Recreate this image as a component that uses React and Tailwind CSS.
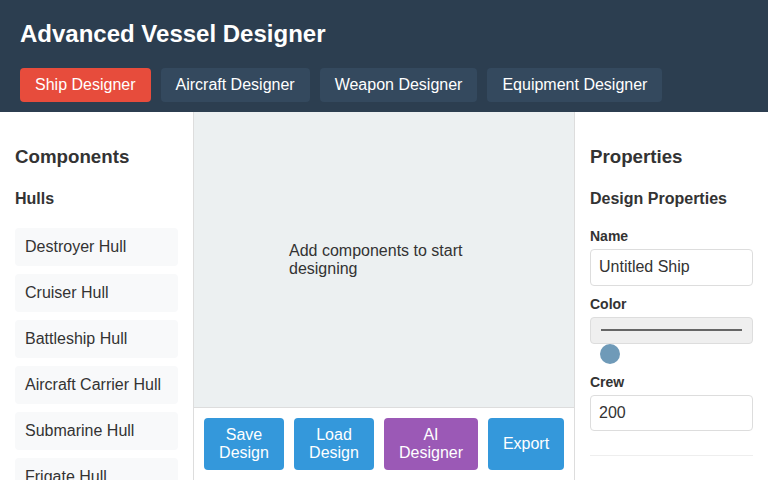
import React from "react";

const tabs = ["Ship Designer", "Aircraft Designer", "Weapon Designer", "Equipment Designer"];
const hulls = [
  "Destroyer Hull",
  "Cruiser Hull",
  "Battleship Hull",
  "Aircraft Carrier Hull",
  "Submarine Hull",
  "Frigate Hull",
];

function Header() {
  return (
    <header className="bg-[#2c3e50] px-5 pt-5 pb-[10px] text-white">
      <h1 className="text-[24px] font-bold leading-[28px]">Advanced Vessel Designer</h1>
      <nav className="mt-5 flex gap-[10px]">
        {tabs.map((t, i) => (
          <button
            key={t}
            className={
              "rounded px-[15px] py-2 text-[16px] leading-[18px] text-white " +
              (i === 0 ? "bg-[#e74c3c]" : "bg-[#34495e]")
            }
          >
            {t}
          </button>
        ))}
      </nav>
    </header>
  );
}

function Field({ label, children }) {
  return (
    <div className="mb-[10px]">
      <label className="mb-[5px] block text-[14px] font-bold leading-4 text-[#333]">{label}</label>
      {children}
    </div>
  );
}

export default function App() {
  return (
    <div className="h-[480px] overflow-hidden bg-white font-['Liberation_Sans',Arial,sans-serif] text-[#333]">
      <Header />
      <div className="flex h-[368px]">
        <aside className="w-[194px] shrink-0 overflow-hidden border-r border-[#ddd] p-[15px]">
          <h3 className="mt-[18.7px] text-[18.72px] font-bold leading-[21.5px]">Components</h3>
          <h4 className="mt-[22.5px] text-[16px] font-bold leading-[18.4px]">Hulls</h4>
          <ul className="mt-[20px] flex flex-col gap-2">
            {hulls.map((h) => (
              <li key={h} className="rounded bg-[#f8f9fa] p-[10px] text-[16px] leading-[18px]">
                {h}
              </li>
            ))}
          </ul>
        </aside>

        <main className="flex flex-1 flex-col">
          <div className="flex flex-1 items-center justify-center bg-[#ecf0f1]">
            <p className="w-[190px] text-[16px] leading-[18px]">Add components to start designing</p>
          </div>
          <div className="flex h-[73px] gap-[10px] border-t border-[#ddd] bg-white p-[10px]">
            <button className="w-[80px] rounded bg-[#3498db] px-2 text-[16px] leading-[18px] text-white">Save Design</button>
            <button className="w-[80px] rounded bg-[#3498db] px-2 text-[16px] leading-[18px] text-white">Load Design</button>
            <button className="w-[94px] rounded bg-[#9b59b6] px-2 text-[16px] leading-[18px] text-white">AI Designer</button>
            <button className="w-[76px] rounded bg-[#3498db] px-2 text-[16px] leading-[18px] text-white">Export</button>
          </div>
        </main>

        <aside className="w-[194px] shrink-0 overflow-hidden border-l border-[#ddd] p-[15px]">
          <h3 className="mt-[18.7px] text-[18.72px] font-bold leading-[21.5px]">Properties</h3>
          <h4 className="mt-[22.5px] text-[16px] font-bold leading-[18.4px]">Design Properties</h4>
          <div className="mt-[20px]">
            <Field label="Name">
              <div className="rounded border border-[#ddd] px-2 py-2 text-[16px] leading-[18.4px]">Untitled Ship</div>
            </Field>
            <Field label="Color">
              <div className="flex h-[27px] items-center rounded border border-[#ddd] bg-[#efefef] px-[10px]">
                <div className="h-[2px] flex-1 bg-[#666]" />
              </div>
              <div className="ml-[10px] h-5 w-5 rounded-full bg-[#6f9ab8]" />
            </Field>
            <Field label="Crew">
              <div className="rounded border border-[#ddd] px-2 py-2 text-[16px] leading-[18.4px]">200</div>
            </Field>
            <hr className="mt-[24px] border-[#eee]" />
          </div>
        </aside>
      </div>
    </div>
  );
}
